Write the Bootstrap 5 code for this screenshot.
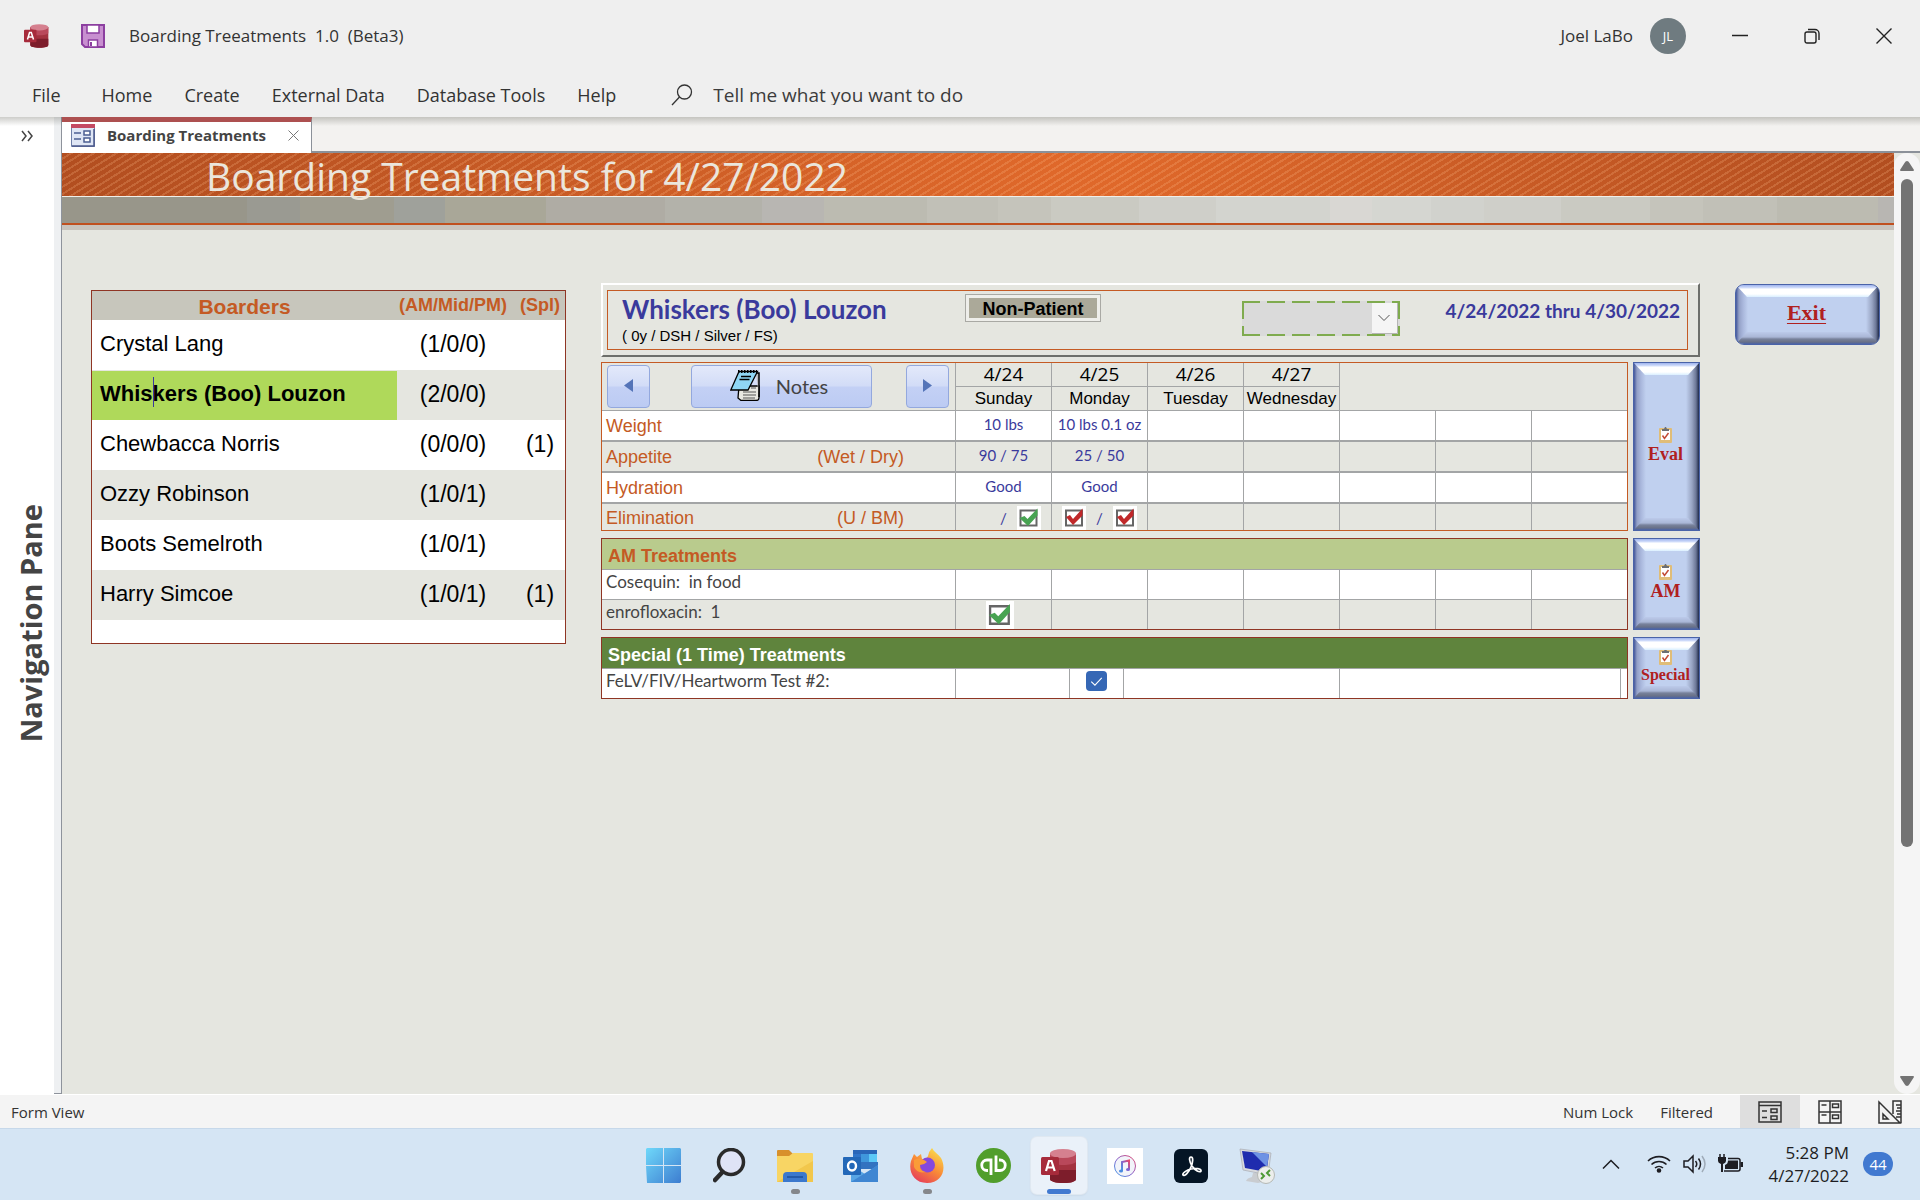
<!DOCTYPE html>
<html lang="en">
<head>
<meta charset="utf-8">
<meta name="viewport" content="width=device-width, initial-scale=1">
<title>Boarding Treatments</title>
<link rel="stylesheet" href="https://cdn.jsdelivr.net/npm/bootstrap@5.3.0/dist/css/bootstrap.min.css">
<style>
:root{--ui:"Open Sans","Noto Sans",sans-serif;--form:"Liberation Sans",Arial,sans-serif;--data:Lato,Carlito,sans-serif;
 --paper:#e5e6e0;--rust:#c45a24;--brick:#8f3524;--rule:#a3a5a6;--ink:#3a3a9c}
body{font-family:var(--ui);background:#efefef;color:#333;font-size:15px;line-height:20px}
svg{display:block;flex:none}
button{font:inherit;color:inherit}
.plain{background:none;border:0;padding:0}
/* title bar and ribbon */
.titlebar{height:72px;font-size:17px;padding-left:24px}
.save{margin-left:32px}
.app-title{white-space:pre;margin-left:24px}
.avatar{width:36px;height:36px;border-radius:50%;background:#6f7b80;color:#fff;font-size:13px;margin:0 18px 0 17px}
.win{width:72px;height:72px;display:flex;align-items:center;justify-content:center}
.ribbon{height:45px;font-size:18px;padding-left:32px}
.ribbon a{color:#333;text-decoration:none;margin-right:32px}
.ribbon a:first-child{margin-right:41px}
.lens{margin:0 20px 0 23px}
.tell{border:0;background:none;width:300px;padding:0;color:#333;font-size:19px}
.tell::placeholder{color:#3c3c3c;opacity:1}
/* workspace */
.work{background:#f3f2f0;position:relative}
.work::before{content:"";position:absolute;left:0;right:0;top:0;height:9px;background:linear-gradient(rgba(90,90,80,.3),rgba(90,90,80,0));pointer-events:none}
.navpane{width:54px;background:#fff;padding-top:13px}
.navlabel{writing-mode:vertical-rl;transform:rotate(180deg);font-weight:700;font-size:29px;line-height:30px;color:#444;margin:362px 0 0 8px}
.splitter{width:8px;background:#eef0f2;border-right:1px solid #8e939c;border-bottom:1px solid #8e939c}
.page-area,.fill{min-width:0}
.tabstrip{height:36px;border-bottom:2px solid #8b9199}
.doctab{width:250px;height:36px;background:#fff;border-top:5px solid #ad5050;border-right:1px solid #8b9199;font-size:15px;font-weight:700;color:#444;padding:0 12px 5px 9px;position:relative}
.formview{background:var(--paper)}
.banner{height:43px;padding-left:144px;font-size:39px;line-height:46px;color:#ebe6dc;font-weight:500;margin:0;white-space:nowrap;
 background:repeating-linear-gradient(148deg,rgba(255,190,140,0) 0 4px,rgba(255,190,140,.22) 4px 6px),linear-gradient(90deg,#b24e20,#df682a 54%,#df682a 58%,#b24e20)}
.mosaic{border-top:1px solid #f1efe8;border-bottom:2px solid #c0501f;box-sizing:content-box;height:26px;
 background:linear-gradient(90deg,#98968a 10.1%,#9a9a92 0 13%,#9f9d90 0 18.1%,#9fa19b 0 20.9%,#a9a798 0 26.4%,#afaca4 0 32.9%,#b3b2aa 0 38.2%,#b8b6b2 0 41.6%,#bcbbb1 0 47.2%,#c1c0b7 0 51.1%,#c5c4bb 0 54%,#cacac2 0 58.8%,#cfcfc9 0 63%,#d3d4cf 0 69.2%,#d9d7d3 0 71.5%,#d5d6d1 0 74.7%,#d1d2cd 0 77.6%,#cfcfc9 0 81.8%,#cacac2 0 86.7%,#c5c4bb 0 89.6%,#c1c0b7 0 93.6%,#bcbbb1 0 99.1%,#b8b6b2 0)}
.underbar{height:5px;background:#c8c3bc}
.content-row{padding:53px 14px 0 29px;gap:35px;font-family:var(--form)}
.scroll{width:26px;background:#f5f5f5;border-radius:13px}
.thumb{width:12px;height:668px;border-radius:6px;background:#737373;margin-top:8px}
/* boarders */
.boarders{width:475px;margin-top:7px;border:1px solid var(--brick);background:#fff;padding-bottom:23px;color:#000}
.boarders table,.gridbox table{width:100%;table-layout:fixed;border-collapse:separate;border-spacing:0}
.boarders th{background:#c7c6bc;color:var(--rust);height:29px;padding:0;text-align:center;font-size:18px;line-height:28px;vertical-align:top;white-space:nowrap}
.boarders th:first-child{font-size:21px;padding-top:2px;line-height:27px;vertical-align:middle}
.boarders td{height:50px;padding:0 0 3px;text-align:center;font-size:23px;line-height:26px}
.boarders td:first-child{text-align:left;padding-left:8px;font-size:22px}
.boarders th:last-child,.boarders td:last-child{padding-left:6px}
.boarders tbody tr:nth-child(even) td{background:var(--paper)}
.boarders tbody tr.current td:first-child{background:#afd95a;font-weight:700;border-top:1px solid var(--paper)}
.caret-bar{position:relative}
.caret-bar::after{content:"";position:absolute;left:0;top:-4px;width:1px;height:30px;background:#3a3a9c}
/* patient header */
.patient{border:2px solid;border-color:#fff #6d6f6b #6d6f6b #fff;padding:5px 10px 5px 4px;margin-bottom:5px}
.patient-in{border:1px solid var(--rust);height:60px;display:grid;grid-template-columns:357px 277px 1fr auto;padding-right:7px}
.pname{font:700 26px/30px var(--data);color:var(--ink);margin:3px 0 0 14px;white-space:nowrap}
.pinfo{font-size:15px;line-height:24px;color:#000;margin-left:14px}
.flag{border:1px solid #a9a9a4;padding:3px;background:#eeeeea;height:28px;width:136px;margin-top:3px}
.flag span{display:block;background:#aba999;color:#000;font-weight:700;font-size:18px;line-height:20px;padding-top:1px;height:20px;text-align:center}
.pick{width:158px;height:35px;padding:2px;margin-top:10px;background:
 repeating-linear-gradient(90deg,#7fab4e 0 18px,#dadada 18px 25px) 0 0/100% 2px no-repeat,
 repeating-linear-gradient(90deg,#7fab4e 0 18px,#dadada 18px 25px) 0 100%/100% 2px no-repeat,
 repeating-linear-gradient(#7fab4e 0 18px,#dadada 18px 25px) 0 0/2px 100% no-repeat,
 repeating-linear-gradient(#7fab4e 0 18px,#dadada 18px 25px) 100% 0/2px 100% no-repeat}
.pick select{appearance:none;border:0;width:100%;height:100%;border-radius:0;background:
 url("data:image/svg+xml,%3Csvg xmlns='http://www.w3.org/2000/svg' width='26' height='31'%3E%3Cpath d='M0 0h25v30H0z' fill='%23f5f5f5'/%3E%3Cpath d='M0 30.500h25.500V0' fill='none' stroke='%23b5b5b5'/%3E%3Cpath d='M6.500 12l5.500 5.500L17.500 12' fill='none' stroke='%23555'/%3E%3C/svg%3E") right 0 top 0 no-repeat #dadada}
.span-dates{font:700 19px/26px var(--data);color:var(--ink);margin-top:7px;white-space:nowrap}
/* treatment grids */
.band{display:flex;gap:5px;margin-bottom:7px}
.gridbox{flex:1;min-width:0;border:1px solid var(--brick)}
.gridbox.rust{border-color:var(--rust)}
.gridbox th,.gridbox td{padding:0;border:0 solid var(--rule);border-left-width:1px;border-bottom-width:1px;text-align:center;vertical-align:middle;font-weight:400;white-space:nowrap}
.gridbox tr>:first-child.lead-cell{border-left:0}
.gridbox tbody tr:last-child>*{border-bottom:0}
.c-first{width:353px}
.days th{height:24px;color:#000;font-size:17px;line-height:22px}
.days .dnum{font-family:var(--ui);font-size:19px;line-height:20px;padding-bottom:2px}
.days .tools{padding:0 6px 0 5px}
.eval tbody tr>*{height:31px;border-bottom-width:2px;background:#fff}
.eval tbody tr:nth-child(even)>*{background:var(--paper)}
.eval tbody tr:last-child>*{height:26px}
.eval tbody td{font:15px/20px var(--data);color:var(--ink);padding-bottom:4px}
.eval tbody tr:last-child td{padding:1px 0 0}
.eval tbody th{font-size:18px;line-height:24px;color:var(--rust);text-align:left;padding-left:4px}
.eval tbody tr:last-child th{padding-top:2px}
.cap{display:flex;justify-content:space-between;padding-right:51px}
.navbtn{height:43px;border:1px solid #93a8de;border-radius:4px;background:linear-gradient(#e3e9fa,#d2dcf7 48%,#c3d0f5 52%,#bccbf3);display:flex;align-items:center;justify-content:center;padding:0 0 2px;color:#444;font:20px/24px var(--data)}
.sq{width:43px}
.notes{width:181px;gap:16px;margin-left:6px;padding-right:4px}
.treat th,.treat td{height:30px;background:#fff}
.treat thead th{height:31px;text-align:left;padding:3px 0 0 6px;font-weight:700;font-size:18px;line-height:26px;border-left:0}
.treat tbody th{font:17px/20px var(--data);color:#444;text-align:left;padding:0 0 6px 4px;white-space:pre}
.treat tbody tr:nth-child(even)>*{background:var(--paper)}
.treat tbody tr:last-child>*{height:29px}
.am thead th{background:#b9cb8d;color:var(--rust)}
.spl thead th{background:#5f843d;color:#fff}
.spl tbody td{padding-bottom:5px}
.tick{appearance:none;display:block;margin:0;width:24px;height:24px;background:#fff center/100% no-repeat}
.tick.big{width:28px;height:28px;margin-left:30px}
.tick.green{background-image:url("data:image/svg+xml,%3Csvg xmlns='http://www.w3.org/2000/svg' viewBox='0 0 24 24'%3E%3Cpath d='M3.500 4.500h16v15h-16z' fill='%23fff' stroke='%23666' stroke-width='2'/%3E%3Cpath d='M2.500 12l5-2 3 3L20.500 2.500v7L11 20z' fill='%2348a352'/%3E%3C/svg%3E")}
.tick.red{background-image:url("data:image/svg+xml,%3Csvg xmlns='http://www.w3.org/2000/svg' viewBox='0 0 24 24'%3E%3Cpath d='M4 4.500h16v15H4z' fill='%23fff' stroke='%23666' stroke-width='2'/%3E%3Cpath d='M4 11l4-2 3 4L20.500 2.500v7L11 19z' fill='%23c0282a'/%3E%3C/svg%3E")}
.tick.blue{width:21px;height:20px;margin:auto;border-radius:4px;background:#3567b5 url("data:image/svg+xml,%3Csvg xmlns='http://www.w3.org/2000/svg' viewBox='0 0 20 20'%3E%3Cpath d='M5 10.500l3.500 3.500L15 7' fill='none' stroke='%23fff'/%3E%3C/svg%3E") center/100% no-repeat}
.pair{display:flex;justify-content:center;align-items:center}
.pair span{width:27px}
.blank{width:24px}
/* bevelled buttons */
.bevel{position:relative;width:67px;flex:none;border:1px solid #4a63a8;padding:0 2px 2px 0;color:#b0201f;font:700 18px/22px "Liberation Serif",serif;
 display:flex;flex-direction:column;align-items:center;justify-content:center;overflow:hidden;
 background:linear-gradient(90deg,#46599c 0,#93a0c6 3px,#a9b7dc 7px,#c0d0ef 12px,#c0d0ef calc(100% - 13px),#98a4c2 calc(100% - 7px),#6c7796 calc(100% - 3px),#1f2a4a)}
.bevel::before,.bevel::after{content:"";position:absolute;left:0;right:0;height:12px}
.bevel::before{top:0;background:linear-gradient(#9fb4ee,#d5e0fb 3px,#fff 4px,#fff 9px,#d9efff);clip-path:polygon(0 0,100% 0,calc(100% - 11px) 100%,11px 100%)}
.bevel::after{bottom:0;background:linear-gradient(#bccaea,#a9b6d6 5px,#78829c 7px,#687087 10px,#4a63a8);clip-path:polygon(11px 0,calc(100% - 11px) 0,100% 100%,0 100%)}
.bevel.small-cap{font-size:16px;line-height:20px}
.exit{width:145px;height:61px;border-radius:9px;margin-top:1px;padding-bottom:3px;font-size:22px;text-decoration:underline;text-decoration-thickness:1px;text-underline-offset:3px}
/* status bar and taskbar */
.status{height:34px;background:#f4f4f4;border-top:1px solid #fff;padding-left:11px}
.filtered{margin:0 27px}
.view{width:60px;height:33px;display:flex;align-items:center;justify-content:center}
.view.on{background:#dedede}
.taskbar{height:72px;background:#d5e5f4;color:#1d1d22;border-top:1px solid #c6d8ea}
.dock{display:flex;gap:10px;padding:8px 0 0 635px}
.task{width:56px;height:57px;border-radius:6px;display:flex;align-items:center;justify-content:center;position:relative}
.task.open{background:#eaf1f9;box-shadow:0 0 0 1px #dfe8f1,0 1px 2px #b8c6d6}
.task.open::after,.task.run::after{content:"";position:absolute;bottom:0;width:24px;height:5px;border-radius:3px;background:#4179d0}
.task.run::after{width:9px;background:#85878b}
.tray{padding:0 27px 2px 0}
.tray-wifi{margin-left:27px}
.tray-sound{margin:0 11px 0 12px}
.clock{font-size:17px;line-height:23px;text-align:right;margin:0 14px 0 25px}
.count{width:30px;height:24px;border-radius:12px;background:#4179d0;color:#fff;font-size:15px;line-height:24px;text-align:center}
</style>
<script src="https://cdn.jsdelivr.net/npm/bootstrap@5.3.0/dist/js/bootstrap.bundle.min.js"></script>
</head>
<body class="d-flex flex-column min-vh-100">
<svg width="0" height="0" class="position-absolute" aria-hidden="true">
 <symbol id="access" viewBox="0 0 36 34"><path d="M9 4v26c0 2.500 6 4 13.500 4S35 32.500 35 30V4z" fill="#a3323f"/><path d="M9 21h26v9c0 2.500-5 4-12.500 4S9 32.500 9 30z" fill="#7d1d2b"/><path d="M9 4h26v9c-2 2-7 3-12.500 3S9 15 9 12z" fill="#b9485a"/><ellipse cx="22" cy="4.500" rx="13" ry="4.500" fill="#d5808f"/><rect y="8" width="18" height="18" rx="1.500" fill="#a72b3b"/><path d="M5 22l3-10h2.500l3.200 10M6.500 18.500h5.500" fill="none" stroke="#fff" stroke-width="2.200"/></symbol>
 <symbol id="clip" viewBox="0 0 13 16"><rect y="1" width="13" height="15" rx="1" fill="#e0bd78"/><path d="M2 3h9v10H2z" fill="#fff"/><path d="M3 2h2l1-2h1l1 2h2v2H3z" fill="#6d6f72"/><path d="M3.500 8.500l2 3L9.500 6" fill="none" stroke="#c24a35" stroke-width="1.500"/></symbol>
</svg>

<header>
 <div class="titlebar d-flex align-items-center">
  <svg width="25" height="24" viewBox="0 0 25 24"><use href="#access" width="25" height="24"/></svg>
  <button class="plain save" aria-label="Save"><svg width="24" height="24" viewBox="0 0 24 24"><path d="M1 1h22v22H4l-3-3z" fill="#c88fd0" stroke="#8c3fa0" stroke-width="2"/><path d="M6 1h12v8H6zM7.500 16h9v7h-9z" fill="#fff" stroke="#8c3fa0" stroke-width="1.500"/><path d="M10 18v4" stroke="#8c3fa0" stroke-width="2"/></svg></button>
  <span class="app-title">Boarding Treeatments  1.0  (Beta3)</span>
  <span class="ms-auto">Joel LaBo</span>
  <span class="avatar d-flex align-items-center justify-content-center">JL</span>
  <button class="plain win" aria-label="Minimize"><svg width="16" height="16"><path d="M0 7.500h16" stroke="#222" stroke-width="1.500"/></svg></button>
  <button class="plain win" aria-label="Restore"><svg width="16" height="16" fill="none" stroke="#222" stroke-width="1.400"><rect x="1" y="4" width="11" height="11" rx="2"/><path d="M4 1.500h7a4 4 0 0 1 4 4V12"/></svg></button>
  <button class="plain win" aria-label="Close"><svg width="16" height="16"><path d="M.5.5l15 15m0-15l-15 15" stroke="#222" stroke-width="1.400"/></svg></button>
 </div>
 <nav class="ribbon d-flex align-items-center">
  <a href="#">File</a><a href="#">Home</a><a href="#">Create</a><a href="#">External Data</a><a href="#">Database Tools</a><a href="#">Help</a>
  <svg class="lens" width="22" height="22" viewBox="0 0 22 22" fill="none" stroke="#333" stroke-width="1.300"><circle cx="13.500" cy="8" r="7"/><path d="M8.500 13L1 21"/></svg>
  <input class="tell" type="text" placeholder="Tell me what you want to do" aria-label="Tell me what you want to do">
 </nav>
</header>

<main class="work d-flex flex-grow-1">
 <aside class="navpane d-flex flex-column align-items-center flex-shrink-0">
  <button class="plain" aria-label="Expand navigation pane"><svg width="12" height="12" viewBox="0 0 12 12" fill="none" stroke="#444" stroke-width="1.500"><path d="M1 1l4 5-4 5M7 1l4 5-4 5"/></svg></button>
  <div class="navlabel">Navigation Pane</div>
 </aside>
 <div class="splitter flex-shrink-0"></div>
 <section class="page-area flex-grow-1 d-flex flex-column">
  <div class="tabstrip">
   <div class="doctab d-flex align-items-center">
    <svg width="24" height="23" viewBox="0 0 24 23"><path d="M.5.5h23v22H.5z" fill="#dfe6f5" stroke="#6f7fa8"/><path d="M0 0h24v4H0z" fill="#c44a63"/><path d="M23 5v17H1" fill="none" stroke="#4c5a8c" stroke-width="1.500"/><path d="M3 9h7M3 15h7" stroke="#4c5f92" stroke-width="1.500"/><path d="M13 7h6v4h-6zM13 14h6v4h-6z" fill="#fff" stroke="#4c5f92" stroke-width="1.500"/></svg>
    <span class="ms-2 ps-1">Boarding Treatments</span>
    <button class="plain ms-auto" aria-label="Close tab"><svg width="11" height="11"><path d="M.5.5l10 10m0-10l-10 10" stroke="#777"/></svg></button>
   </div>
  </div>
  <div class="formview d-flex flex-grow-1">
   <div class="fill flex-grow-1">
    <h1 class="banner">Boarding Treatments for 4/27/2022</h1>
    <div class="mosaic"></div><div class="underbar"></div>
    <div class="content-row d-flex align-items-start">
     <div class="boarders flex-shrink-0">
      <table>
       <colgroup><col style="width:305px"><col style="width:112px"><col></colgroup>
       <thead><tr><th>Boarders</th><th>(AM/Mid/PM)</th><th>(Spl)</th></tr></thead>
       <tbody>
        <tr><td>Crystal Lang</td><td>(1/0/0)</td><td></td></tr>
        <tr class="current"><td>Whis<span class="caret-bar"></span>kers (Boo) Louzon</td><td>(2/0/0)</td><td></td></tr>
        <tr><td>Chewbacca Norris</td><td>(0/0/0)</td><td>(1)</td></tr>
        <tr><td>Ozzy Robinson</td><td>(1/0/1)</td><td></td></tr>
        <tr><td>Boots Semelroth</td><td>(1/0/1)</td><td></td></tr>
        <tr><td>Harry Simcoe</td><td>(1/0/1)</td><td>(1)</td></tr>
       </tbody>
      </table>
     </div>

     <div class="fill flex-grow-1">
      <div class="patient"><div class="patient-in">
       <div><h2 class="pname">Whiskers (Boo) Louzon</h2><div class="pinfo">( 0y / DSH / Silver / FS)</div></div>
       <div class="flag"><span>Non-Patient</span></div>
       <div class="pick"><select aria-label="Status"><option></option></select></div>
       <div class="span-dates">4/24/2022 thru 4/30/2022</div>
      </div></div>

      <div class="band">
       <div class="gridbox rust">
        <table class="eval">
         <colgroup><col class="c-first"><col><col><col><col><col><col><col></colgroup>
         <thead class="days">
          <tr><th rowspan="2" class="lead-cell"><div class="tools d-flex justify-content-between"><button class="navbtn sq" aria-label="Previous"><svg width="9" height="13"><path d="M9 0v13L0 6.500z" fill="#5474b8"/></svg></button><button class="navbtn notes"><svg width="30" height="31" viewBox="0 0 30 31"><path d="M9 16h20v12c0 2-1 2.500-3 2.500H11L8 28z" fill="#e8e8e2" stroke="#000" stroke-width="1.300"/><path d="M26 3h3v24" fill="#bbb" stroke="#000" stroke-width="1.500"/><path d="M13 22h13M13 25h13M13 28h12M21 18h5" stroke="#555"/><path d="M9 1.500h18.500L18 20H.8z" fill="#8fd6f5" stroke="#000" stroke-width="1.300"/><path d="M8 1.500h19" stroke="#000" stroke-width="3" stroke-dasharray="1.500 1.500"/><path d="M11 6.500h10M9.500 9.500h10" stroke="#000" stroke-width="1.300"/></svg>Notes</button><button class="navbtn sq" aria-label="Next"><svg width="9" height="13"><path d="M0 0v13l9-6.500z" fill="#5474b8"/></svg></button></div></th><th class="dnum">4/24</th><th class="dnum">4/25</th><th class="dnum">4/26</th><th class="dnum">4/27</th><th rowspan="2" colspan="3"></th></tr>
          <tr><th>Sunday</th><th>Monday</th><th>Tuesday</th><th>Wednesday</th></tr>
         </thead>
         <tbody>
          <tr><th class="lead-cell">Weight</th><td>10 lbs</td><td>10 lbs 0.1 oz</td><td></td><td></td><td></td><td></td><td></td></tr>
          <tr><th class="lead-cell"><div class="cap"><span>Appetite</span><span>(Wet / Dry)</span></div></th><td>90 / 75</td><td>25 / 50</td><td></td><td></td><td></td><td></td><td></td></tr>
          <tr><th class="lead-cell">Hydration</th><td>Good</td><td>Good</td><td></td><td></td><td></td><td></td><td></td></tr>
          <tr><th class="lead-cell"><div class="cap"><span>Elimination</span><span>(U / BM)</span></div></th><td><div class="pair"><i class="blank"></i><span>/</span><input type="checkbox" class="tick green" checked aria-label="BM 4/24"></div></td><td><div class="pair"><input type="checkbox" class="tick red" checked aria-label="U 4/25"><span>/</span><input type="checkbox" class="tick red" checked aria-label="BM 4/25"></div></td><td></td><td></td><td></td><td></td><td></td></tr>
         </tbody>
        </table>
       </div>
       <button class="bevel"><svg width="13" height="16"><use href="#clip"/></svg>Eval</button>
      </div>

      <div class="band">
       <div class="gridbox">
        <table class="treat am">
         <colgroup><col class="c-first"><col><col><col><col><col><col><col></colgroup>
         <thead><tr><th colspan="8">AM Treatments</th></tr></thead>
         <tbody>
          <tr><th class="lead-cell">Cosequin:  in food</th><td></td><td></td><td></td><td></td><td></td><td></td><td></td></tr>
          <tr><th class="lead-cell">enrofloxacin:  1</th><td><input type="checkbox" class="tick green big" checked aria-label="enrofloxacin 4/24"></td><td></td><td></td><td></td><td></td><td></td><td></td></tr>
         </tbody>
        </table>
       </div>
       <button class="bevel"><svg width="13" height="16"><use href="#clip"/></svg>AM</button>
      </div>

      <div class="band">
       <div class="gridbox">
        <table class="treat spl">
         <colgroup><col class="c-first"><col style="width:114px"><col style="width:54px"><col style="width:216px"><col><col style="width:7px"></colgroup>
         <thead><tr><th colspan="6">Special (1 Time) Treatments</th></tr></thead>
         <tbody><tr><th class="lead-cell">FeLV/FIV/Heartworm Test #2:</th><td></td><td><input type="checkbox" class="tick blue" checked aria-label="Test done"></td><td></td><td></td><td></td></tr></tbody>
        </table>
       </div>
       <button class="bevel small-cap"><svg width="13" height="16"><use href="#clip"/></svg>Special</button>
      </div>
     </div>

     <button class="bevel exit">Exit</button>
    </div>
   </div>
   <div class="scroll d-flex flex-column align-items-center flex-shrink-0">
    <svg width="14" height="10" class="mt-2"><path d="M7 0q1.500 0 2.500 2L14 9q0 1-1 1H1Q0 10 0 9l4.500-7Q5.500 0 7 0z" fill="#737373"/></svg>
    <div class="thumb"></div>
    <svg width="14" height="10" class="mt-auto mb-2"><path d="M7 10q1.500 0 2.500-2L14 1q0-1-1-1H1Q0 0 0 1l4.500 7Q5.500 10 7 10z" fill="#737373"/></svg>
   </div>
  </div>
 </section>
</main>

<footer>
 <div class="status d-flex align-items-center">
  <span>Form View</span>
  <span class="ms-auto">Num Lock</span><span class="filtered">Filtered</span>
  <button class="plain view on" aria-label="Form View"><svg width="24" height="22" viewBox="0 0 24 22" fill="none" stroke="#333" stroke-width="1.500"><path d="M1 1h22v20H1zM1 4.500h22M4 10h5M4 16.500h5M13 8h6v3.500h-6zM13 15h6v3.500h-6z"/></svg></button>
  <button class="plain view" aria-label="Layout View"><svg width="24" height="24" viewBox="0 0 24 24" fill="none" stroke="#333" stroke-width="1.500"><path d="M1 1h22v22H1zM12 1v22M1 12h22M3.500 5h5M3.500 15h5M14.500 4h6v3.500h-6zM14.500 15h6v3.500h-6z"/></svg></button>
  <button class="plain view" aria-label="Design View"><svg width="24" height="24" viewBox="0 0 24 24" fill="none" stroke="#333" stroke-width="1.500"><path d="M1 2v21h21zM5 14v5h5zM15 14V1h8v22M23 5h-5M23 8h-4M23 11h-5M23 14h-4M23 17h-5"/></svg></button>
 </div>
 <div class="taskbar d-flex">
  <div class="dock">
   <button class="plain task" aria-label="Start"><svg width="35" height="35" viewBox="0 0 35 35"><defs><linearGradient id="w" x2="1" y2="1"><stop stop-color="#6fd8fa"/><stop offset="1" stop-color="#3d7dd0"/></linearGradient></defs><path d="M1 0h16v17H0V1zM18 0h16l1 1v16H18zM0 18h17v17H1zM18 18h17v16l-1 1H18z" fill="url(#w)"/></svg></button>
   <button class="plain task" aria-label="Search"><svg width="33" height="35" viewBox="0 0 33 35"><circle cx="18" cy="14" r="12.500" fill="#dfe3f6" stroke="#2a2a2a" stroke-width="3.500"/><path d="M9.500 24L2 32" stroke="#2a2a2a" stroke-width="4.500" stroke-linecap="round"/></svg></button>
   <button class="plain task run" aria-label="File Explorer"><svg width="36" height="34" viewBox="0 0 36 34"><path d="M0 2q0-1 1-1h11l4 4-3 4H0z" fill="#d8902b"/><path d="M0 7h12l4-3h19q1 0 1 1v28H0z" fill="#f8d564"/><path d="M36 12v21H0z" fill="#efc042" opacity=".7"/><path d="M6 33v-6q0-4 4-4h16q4 0 4 4v6z" fill="#3b78cd"/><path d="M10 28h16" stroke="#1c4f9d" stroke-width="1.500"/></svg></button>
   <button class="plain task" aria-label="Outlook"><svg width="36" height="34" viewBox="0 0 36 34"><path d="M10 1h24v16H10z" fill="#2a66b8"/><path d="M10 5h8v12h-8z" fill="#2f74c8"/><path d="M18 5h8v8h-8z" fill="#3f97dc"/><path d="M26 5h8v8h-8z" fill="#5cc8f6"/><path d="M18 13h17v7H18z" fill="#3272c0"/><path d="M8 16l14 9 13-9v17H8z" fill="#58a5e4"/><path d="M8 33l27-17v17z" fill="#3f86d2"/><rect y="8" width="18" height="18" rx="1" fill="#2368b8"/><ellipse cx="9" cy="17" rx="4" ry="4.500" fill="none" stroke="#fff" stroke-width="2.400"/></svg></button>
   <button class="plain task run" aria-label="Firefox"><svg width="34" height="35" viewBox="0 0 34 35"><defs><linearGradient id="f" x1=".8" x2=".2" y2="1"><stop stop-color="#fbe14d"/><stop offset=".5" stop-color="#f98b37"/><stop offset="1" stop-color="#e53a5c"/></linearGradient></defs><path d="M22 0c2 4 6 6 9 10 6 11 1 25-14 25C4 35-2 24 1 13l3-7 3 3 4-3 1 5q5 0 6-3 1-5 4-8z" fill="url(#f)"/><circle cx="17.500" cy="17" r="7.500" fill="#8548dd"/><path d="M4 12q6-4 13 2-3 3-7 3-1 6 6 7-9 2-12-5z" fill="#fa9c38"/></svg></button>
   <button class="plain task" aria-label="QuickBooks"><svg width="35" height="35" viewBox="0 0 35 35"><circle cx="17.500" cy="17.500" r="17.500" fill="#519e2c"/><path d="M15 27V12h-4a5.200 5.200 0 0 0 0 10.500h1M20 7.500v15h4A5.200 5.200 0 0 0 24 12h-1" fill="none" stroke="#fff" stroke-width="2.800"/></svg></button>
   <button class="plain task open" aria-label="Access"><svg width="36" height="34"><use href="#access"/></svg></button>
   <button class="plain task" aria-label="iTunes"><svg width="36" height="36" viewBox="0 0 36 36"><defs><linearGradient id="m" x1="1" x2="0" y2="1"><stop stop-color="#e84a6a"/><stop offset=".5" stop-color="#8a5fc8"/><stop offset="1" stop-color="#3fa0ea"/></linearGradient></defs><path d="M0 0h36v36H0z" fill="#fff"/><circle cx="18" cy="18" r="10.500" fill="#f2f4fa" stroke="url(#m)"/><path d="M15 23v-9l7-1.500v9" fill="none" stroke="url(#m)" stroke-width="2"/><ellipse cx="14" cy="23" rx="2" ry="1.600" fill="#4a8ae0"/><ellipse cx="21" cy="21.500" rx="2" ry="1.600" fill="#7a62d0"/></svg></button>
   <button class="plain task" aria-label="Acrobat"><svg width="34" height="34" viewBox="0 0 34 34"><rect width="34" height="34" rx="6" fill="#051525"/><path d="M17 8c-2.500 0-1.500 5 1 9 3 4.500 8 7 9 5 1-2.500-6-3-10-2s-9 4-8 6c1.500 2 6-3 8-8s2.500-10 0-10z" fill="none" stroke="#fff" stroke-width="1.700"/></svg></button>
   <button class="plain task" aria-label="Remote Desktop"><svg width="36" height="36" viewBox="0 0 36 36"><path d="M14 25l10-1v6l3 3-8 2-12-2q1-3 6-4z" fill="#c9ccd0"/><path d="M1 1l31 4-3 22-25-5z" fill="#d8dade" stroke="#a7abb2" stroke-width=".7"/><path d="M3 3l27 3-2.500 18L6 20z" fill="#1f2cae"/><path d="M13 4l17 2-2 13z" fill="#6e92e4"/><circle cx="27" cy="27" r="8.500" fill="#eceeec" stroke="#b5b8b4"/><path d="M22 25l3 3-3 3M31 22l-3 3 3 3" fill="none" stroke="#4d9a35" stroke-width="2"/></svg></button>
  </div>
  <div class="tray d-flex align-items-center ms-auto">
   <button class="plain" aria-label="Show hidden icons"><svg width="18" height="10" fill="none" stroke="#1d1d22" stroke-width="1.500"><path d="M1 9.500L9 1.500l8 8"/></svg></button>
   <svg class="tray-wifi" width="24" height="18" viewBox="0 0 24 18" fill="none" stroke="#1d1d22" stroke-width="1.600"><path d="M1 6a16 16 0 0 1 22 0M4.500 9.500a11 11 0 0 1 15 0M8 13a6 6 0 0 1 8 0"/><circle cx="12" cy="15.500" r="1.500" fill="#1d1d22"/></svg>
   <svg class="tray-sound" width="24" height="20" viewBox="0 0 24 20" fill="none" stroke="#1d1d22" stroke-width="1.500"><path d="M1 7h4l5-5v16l-5-5H1zM12.500 7q2.500 3 0 6M15.500 4.500q4 5.500 0 11"/><path d="M19 2q6 8 0 16" stroke="#9fabb8"/></svg>
   <svg width="25" height="20" viewBox="0 0 25 20"><path d="M2 0v4M6 0v4" stroke="#1d1d22" stroke-width="1.500"/><path d="M0 3h8v4q0 2-3 3v8H3v-8Q0 9 0 7z" fill="#1d1d22"/><path d="M10 4.500h10q2 0 2 2V15q0 2-2 2H6" fill="none" stroke="#1d1d22" stroke-width="1.500"/><path d="M10 6.500h10V15H7v-4q3-1 3-4.500zM22.500 8H25v5h-2.500z" fill="#1d1d22"/></svg>
   <div class="clock">5:28 PM<br>4/27/2022</div>
   <span class="count">44</span>
  </div>
 </div>
</footer>
</body>
</html>
